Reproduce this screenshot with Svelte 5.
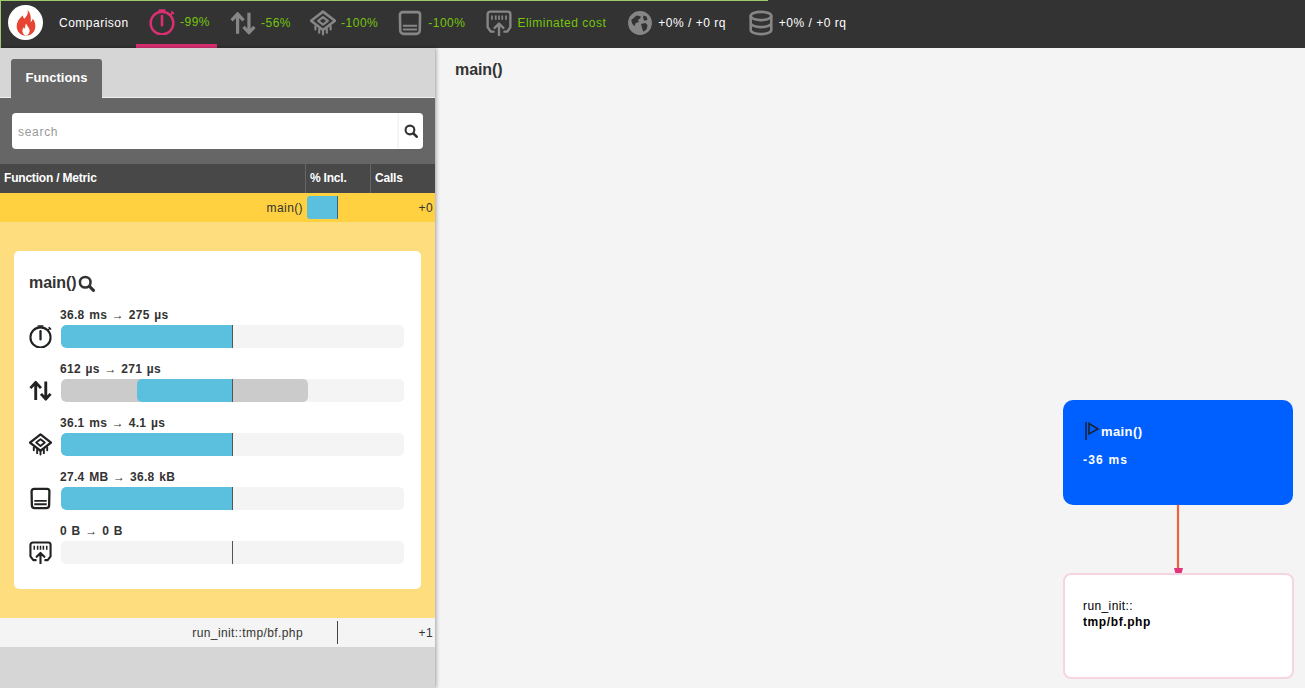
<script>
  const metrics = [
    { label: '-99%', icon: 'clock', active: true, cls: 'good' },
    { label: '-56%', icon: 'arrows', cls: 'good' },
    { label: '-100%', icon: 'chip', cls: 'good' },
    { label: '-100%', icon: 'mem', cls: 'good' },
    { label: 'Eliminated cost', icon: 'net', cls: 'good' },
    { label: '+0% / +0 rq', icon: 'globe', cls: 'plain' },
    { label: '+0% / +0 rq', icon: 'db', cls: 'plain' }
  ];
  const bars = [
    { text: '36.8 ms → 275 µs', icon: 'clock', blue: [0, 50] },
    { text: '612 µs → 271 µs', icon: 'arrows', gray: [0, 72], blue: [22.3, 50] },
    { text: '36.1 ms → 4.1 µs', icon: 'chip', blue: [0, 50] },
    { text: '27.4 MB → 36.8 kB', icon: 'mem', blue: [0, 50] },
    { text: '0 B → 0 B', icon: 'net' }
  ];
</script>

{#snippet icon(name, size)}
  <svg class="ic" width={size} height={size} viewBox="0 0 24 24" fill="none" stroke="currentColor" stroke-width="2" stroke-linecap="round" stroke-linejoin="round">
    {#if name === 'clock'}
      <circle cx="12" cy="13" r="10.500" stroke-width="2.200"/>
      <path d="M9.500 1h5M12 1v1.500" stroke-width="1.600"/>
      <path d="M21 2.500l1.600 1.600M20 5.200l1.800-1.800" stroke-width="1.500"/>
      <path d="M12 6.500v8.500" stroke-width="2.400"/>
    {:else if name === 'arrows'}
      <path d="M7 22V4M1.500 9.500 7 3.500l5.500 6M17.500 2.500v18.500M12.500 15.500l5 5.500 5-5.500" stroke-width="3" stroke-linecap="butt"/>
    {:else if name === 'chip'}
      <path d="M12 1.500 23 10 12 18.500 1 10Z" stroke-width="2.400"/>
      <path d="M12 6.500 16.500 10 12 13.500 7.500 10Z" stroke-width="2"/>
      <path d="M5 15v3M8.500 17.500v3.500M12 19v3.500M15.500 17.500v3.500M19 15v3" stroke-width="2"/>
    {:else if name === 'mem'}
      <path d="M2.700 4.500A2.500 2.500 0 0 1 5.200 2h13.600a2.500 2.500 0 0 1 2.500 2.500L21 19a3 3 0 0 1-3 3H6a3 3 0 0 1-3-3Z" stroke-width="2.400"/>
      <path d="M5.500 14.500h13M5.500 18h13" stroke-width="2" stroke-linecap="butt"/>
    {:else if name === 'net'}
      <path d="M7 20H4.500L1.500 16V4A2.500 2.500 0 0 1 4 1.500h16A2.500 2.500 0 0 1 22.500 4v12l-3 4H17" stroke-width="2.200"/>
      <path d="M5.500 5v4M9 5v4M12 5v4M15 5v4M18.500 5v4" stroke-width="1.600" stroke-linecap="butt"/>
      <path d="M12 23.500V13M8 16.500l4-4 4 4" stroke-width="2.200"/>
    {:else if name === 'globe'}
      <circle cx="12" cy="12" r="11" fill="currentColor" stroke="none"/>
      <path fill="#333" stroke="none" d="M4 9c2-1 3-3 5-4 2 0 3 1 4 1l-1 2-2 1 1 2-3 1-1 3-2-2-1-3ZM13 13l4-1 2 2-1 4-3 2-1-3ZM15 5l3 1 1 3-3 1-1-2Z"/>
    {:else if name === 'db'}
      <ellipse cx="12" cy="5.500" rx="9.500" ry="3.800" stroke-width="2.400"/>
      <path d="M2.500 5.500v13c0 2 4 3.800 9.500 3.800s9.500-1.800 9.500-3.800v-13M2.500 12c0 2 4 3.800 9.500 3.800s9.500-1.800 9.500-3.800" stroke-width="2.400"/>
    {/if}
  </svg>
{/snippet}

{#snippet lens(size)}
  <svg class="ic" width={size} height={size} viewBox="0 0 16 16" fill="none" stroke="currentColor" stroke-linecap="round">
    <circle cx="6.800" cy="6.800" r="5" stroke-width="2.400"/>
    <path d="M10.800 10.800 14.500 14.500" stroke-width="3"/>
  </svg>
{/snippet}

<div class="page">
  <header class="top">
    <div class="logo">
      <svg width="26" height="27" viewBox="0 0 24 26">
        <path fill="#e74433" d="M13.500 1c1 4-1 6-3 8.500C9.500 8.500 9 7.500 9 6c-3.500 3-6 6.500-6 10.500C3 22 7 25.500 12 25.500s9-3.500 9-9c0-3-1-5-2.500-7-.3 1.500-1 2.500-2 3C17 8.500 16.500 4 13.500 1Z"/>
        <path fill="#fff" d="M12 14c1 2.500 3.500 4 3.500 7 0 2-1.500 4.500-3.500 4.500S8.500 23 8.500 21c0-1.500.8-2.800 1.500-3.500.2.800.5 1.200 1 1.500.3-1.500.2-3.500 1-5Z"/>
      </svg>
    </div>
    <div class="cmp">Comparison</div>
    <nav class="mets">
      {#each metrics as m}
        <div class="met" class:active={m.active}>
          {@render icon(m.icon, 26)}
          <span class={m.cls}>{m.label}</span>
        </div>
      {/each}
    </nav>
  </header>
  <div class="loadbar"></div>

  <div class="body">
    <aside class="side">
      <div class="tabs"><div class="tab">Functions</div></div>
      <div class="searchband">
        <div class="search">
          <span class="ph">search</span>
          <span class="sbtn">{@render lens(14)}</span>
        </div>
      </div>
      <div class="thead">
        <div class="c1">Function / Metric</div>
        <div class="c2">% Incl.</div>
        <div class="c3">Calls</div>
      </div>
      <div class="row sel">
        <div class="name">main()</div>
        <div class="pct"><div class="pctfill"></div></div>
        <div class="calls">+0</div>
      </div>
      <div class="detail">
        <div class="card">
          <div class="ctitle"><span>main()</span>{@render lens(17)}</div>
          {#each bars as b}
            <div class="bar">
              <div class="barico">{@render icon(b.icon, 23)}</div>
              <div class="barmain">
                <div class="bartxt">{b.text}</div>
                <div class="track">
                  {#if b.gray}<div class="fill gray" style="left:{b.gray[0]}%;width:{b.gray[1] - b.gray[0]}%"></div>{/if}
                  {#if b.blue}<div class="fill blue" style="left:{b.blue[0]}%;width:{b.blue[1] - b.blue[0]}%"></div>{/if}
                  <div class="mid"></div>
                </div>
              </div>
            </div>
          {/each}
        </div>
      </div>
      <div class="row plainrow">
        <div class="name">run_init::tmp/bf.php</div>
        <div class="pct"><div class="tick"></div></div>
        <div class="calls">+1</div>
      </div>
    </aside>

    <main class="canvas">
      <h1>main()</h1>
      <div class="node n1">
        <div class="nt">
          <svg width="16" height="20" viewBox="0 0 16 20" fill="none" stroke="#1b2430" stroke-width="1.600"><path d="M2 1v18M5 2.500 14 8l-9 5Z"/></svg>
          <b>main()</b>
        </div>
        <div class="nv">-36 ms</div>
      </div>
      <div class="edge"></div>
      <div class="arrow"></div>
      <div class="node n2">
        <div>run_init::</div>
        <b>tmp/bf.php</b>
      </div>
    </main>
  </div>
</div>

<style>
  :global(body) { margin: 0; background: #f4f4f4; }
  .page { width: 1305px; height: 688px; overflow: hidden; position: relative; font-family: "Liberation Sans", Arial, sans-serif; color: #333; }
  .ic { display: block; flex: none; }

  .top { height: 48px; background: #333; display: flex; align-items: stretch; color: #fff; font-size: 12px; letter-spacing: .5px; }
  .logo { width: 35px; height: 35px; margin: 5px 0 0 8px; border-radius: 50%; background: #fff; display: flex; align-items: center; justify-content: center; flex: none; }
  .cmp { margin-left: 16px; line-height: 46px; width: 77px; }
  .mets { display: flex; }
  .met { display: flex; align-items: center; gap: 5px; padding: 0 8px 2px 13px; color: #868686; box-sizing: border-box; height: 48px; }
  .met.active { color: #dc2f72; border-bottom: 4px solid #dc2f72; padding: 0 7px 0 13px; }
  .met:nth-child(2), .met:nth-child(3) { padding-right: 6px; }
  .met:nth-child(6) { padding-right: 9px; }
  .good { color: #74c60c; }
  .plain { color: #fff; }
  .loadbar { position: absolute; left: 0; top: 0; width: 768px; height: 63px; border-top: 1px solid #9fca6c; border-left: 1px solid #9fca6c; box-sizing: border-box; pointer-events: none; }

  .body { display: flex; height: 640px; }
  .side { width: 435px; flex: none; background: #d6d6d6; box-shadow: 1px 0 4px rgba(0,0,0,.35); position: relative; z-index: 1; }
  .tabs { height: 50px; box-sizing: border-box; display: flex; align-items: flex-end; padding-left: 11px; border-bottom: 1px solid #f0f0f0; }
  .tab { width: 91px; height: 39px; margin-bottom: -1px; background: #666; color: #fff; font-size: 13px; font-weight: bold; text-align: center; line-height: 37px; border-radius: 3px 3px 0 0; }
  .searchband { background: #666; height: 66px; padding: 15px 12px 0; box-sizing: border-box; }
  .search { height: 36px; width: 411px; background: #fff; border-radius: 4px; display: flex; justify-content: space-between; align-items: center; }
  .ph { color: #999; font-size: 12px; letter-spacing: .7px; padding: 1px 0 0 6px; }
  .sbtn { width: 24px; height: 36px; display: flex; align-items: center; justify-content: center; box-shadow: -1px 0 2px rgba(0,0,0,.08); color: #333; }

  .thead { height: 29px; background: #484848; color: #fff; font-size: 12px; font-weight: bold; letter-spacing: -.2px; display: flex; line-height: 28px; }
  .c1 { width: 305px; padding-left: 4px; box-sizing: border-box; }
  .c2 { width: 65px; padding-left: 4px; box-sizing: border-box; border-left: 1px solid #666; }
  .c3 { width: 65px; padding-left: 4px; box-sizing: border-box; border-left: 1px solid #666; }

  .row { height: 29px; display: flex; align-items: center; font-size: 12px; letter-spacing: .4px; }
  .row.sel { background: #ffd040; }
  .plainrow { background: #f4f4f4; }
  .name { width: 303px; text-align: right; flex: none; }
  .pct { width: 64px; height: 23px; margin-left: 4px; position: relative; flex: none; }
  .pctfill { width: 30px; height: 23px; background: #5bc0de; border-right: 1px solid #33648a; border-radius: 3px 0 0 3px; }
  .tick { position: absolute; left: 30px; top: 0; height: 23px; width: 1px; background: #444; }
  .calls { flex: 1; text-align: right; padding-right: 2px; }

  .detail { height: 396px; background: #fedd7e; padding: 29px 14px 0; box-sizing: border-box; }
  .card { width: 407px; height: 338px; background: #fff; border-radius: 5px; padding: 22px 17px 0 15px; box-sizing: border-box; }
  .ctitle { display: flex; align-items: center; gap: 2px; height: 20px; font-size: 16px; font-weight: bold; letter-spacing: -.1px; margin-bottom: 1px; }
  .bar { display: flex; height: 54px; align-items: flex-end; position: relative; }
  .barico { width: 32px; height: 23px; display: flex; align-items: center; color: #222; flex: none; }
  .barmain { flex: 1; }
  .bartxt { font-size: 12px; font-weight: bold; letter-spacing: .3px; word-spacing: 1px; line-height: 14px; margin: 0 0 3px -1px; }
  .track { height: 23px; background: #f4f4f4; border-radius: 5px; position: relative; overflow: hidden; }
  .fill { position: absolute; top: 0; bottom: 0; border-radius: 5px 0 0 5px; }
  .fill.blue { background: #5bc0de; }
  .fill.gray { background: #cbcbcb; border-radius: 5px; }
  .mid { position: absolute; left: calc(50% - .5px); top: 0; bottom: 0; width: 1px; background: #555; }

  .canvas { flex: 1; position: relative; }
  h1 { margin: 0; position: absolute; left: 20px; top: 13px; font-size: 16px; font-weight: bold; letter-spacing: -.1px; line-height: 18px; color: #333; }
  .node { position: absolute; left: 628px; width: 230px; height: 105px; box-sizing: border-box; border-radius: 10px; padding: 0 20px; }
  .n1 { top: 352px; background: #0060ff; color: #fff; font-size: 13px; }
  .nt { display: flex; align-items: center; margin-top: 21px; height: 20px; padding-left: 1px; letter-spacing: .4px; }
  .nt b { margin-left: 1px; }
  .nv { margin-top: 12px; font-weight: bold; font-size: 12px; letter-spacing: 1.2px; }
  .n2 { top: 525px; width: 231px; height: 106px; background: #fff; border: 2px solid #f6d5e2; border-radius: 8px; color: #000; font-size: 12px; line-height: 16px; padding: 23px 18px 0; letter-spacing: .4px; }
  .n2 b { display: block; letter-spacing: .6px; }
  .edge { position: absolute; left: 742px; top: 457px; width: 2px; height: 64px; background: #f0623a; box-shadow: 0 0 1px #f0623a; }
  .arrow { position: absolute; left: 739px; top: 520px; width: 9px; height: 5px; background: #e0357a; clip-path: polygon(0 0,100% 0,85% 100%,15% 100%); }
</style>
